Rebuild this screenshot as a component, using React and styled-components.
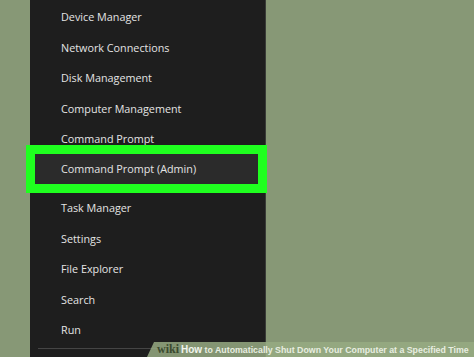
import React from 'react';
import styled, { createGlobalStyle } from 'styled-components';

const GlobalStyle = createGlobalStyle`
    html, body {
        margin: 0;
        padding: 0;
        background: #879876;
        overflow: hidden;
    }
`;

const groups = [
    ['Device Manager', 'Network Connections', 'Disk Management', 'Computer Management', 'Command Prompt', 'Command Prompt (Admin)'],
    ['Task Manager', 'Settings', 'File Explorer', 'Search', 'Run'],
];

const App = () => {
    return (
        <Screen>
            <GlobalStyle />
            <Menu>
                {groups.map((items, gi) => (
                    <React.Fragment key={gi}>
                        {items.map((label) => (
                            <Item key={label} $active={label === 'Command Prompt (Admin)'}>
                                {label}
                            </Item>
                        ))}
                        <Separator />
                    </React.Fragment>
                ))}
            </Menu>
            <Banner>
                <Wiki>wiki</Wiki>
                <Title>
                    <How>How</How> to Automatically Shut Down Your Computer at a Specified Time
                </Title>
            </Banner>
        </Screen>
    );
};

const Screen = styled.div`
    position: relative;
    width: 474px;
    height: 357px;
    overflow: hidden;
    display: flex;
    padding-left: 30px;
    box-sizing: border-box;
`;

const Menu = styled.div`
    width: 236px;
    height: 100%;
    background: #1e1e1e;
    border-right: 1px solid #3a3c38;
    display: flex;
    flex-direction: column;
    padding-top: 1.8px;
    box-sizing: border-box;
`;

const Item = styled.div`
    height: 30.4px;
    margin: 0 7px 0 5px;
    padding-left: 26px;
    display: flex;
    align-items: center;
    flex-shrink: 0;
    font-family: 'Open Sans', 'Noto Sans', sans-serif;
    font-size: 10.8px;
    color: #e4e4e4;
    background: ${(p) => (p.$active ? '#2b2b2b' : 'transparent')};
    outline: ${(p) => (p.$active ? '9px solid #1fff1f' : 'none')};
    position: relative;
    z-index: ${(p) => (p.$active ? 2 : 0)};
`;

const Separator = styled.div`
    height: 1px;
    flex-shrink: 0;
    margin: 3.5px 6px 4px 8px;
    background: #454545;
`;

const Banner = styled.div`
    position: absolute;
    left: 147px;
    right: 0;
    bottom: 0;
    height: 15px;
    padding-left: 10px;
    background: rgba(150, 170, 130, 0.85);
    clip-path: polygon(7px 0, 100% 0, 100% 100%, 0 100%);
    display: flex;
    align-items: center;
    white-space: nowrap;
`;

const Wiki = styled.span`
    font-family: 'Liberation Serif', 'Times New Roman', serif;
    font-size: 12px;
    font-weight: bold;
    color: #3b4a2e;
    margin-right: 2px;
`;

const Title = styled.span`
    font-family: 'Liberation Sans', Arial, sans-serif;
    font-size: 8.8px;
    font-weight: bold;
    color: #e8eee0;
`;

const How = styled.span`
    font-size: 10px;
    color: #f2f5ee;
`;

export default App;
